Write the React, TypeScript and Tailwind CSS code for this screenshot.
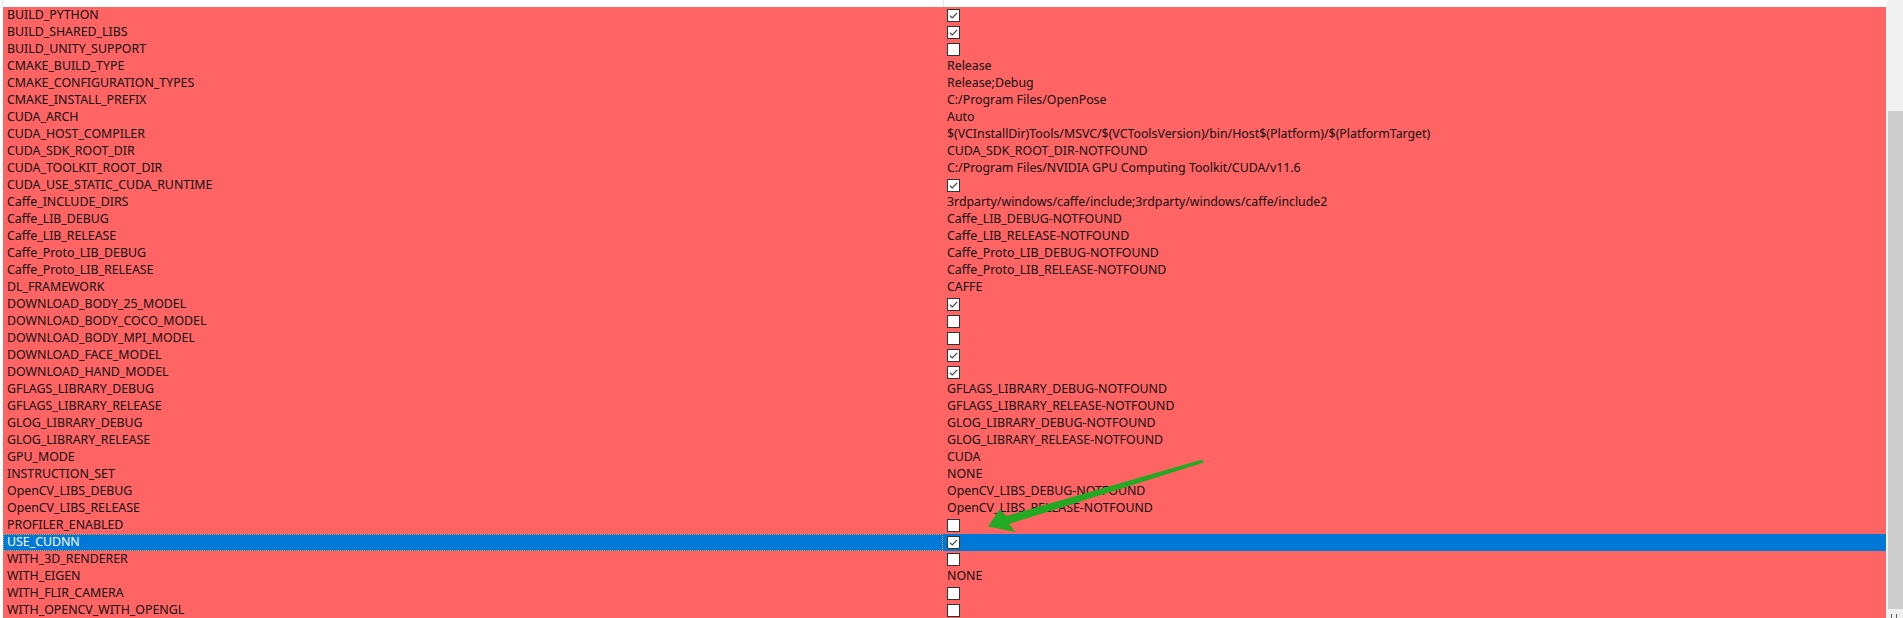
import React from 'react'

type Row = { name: string; value: string | boolean }

const rows: Row[] = [
  { name: 'BUILD_PYTHON', value: true },
  { name: 'BUILD_SHARED_LIBS', value: true },
  { name: 'BUILD_UNITY_SUPPORT', value: false },
  { name: 'CMAKE_BUILD_TYPE', value: 'Release' },
  { name: 'CMAKE_CONFIGURATION_TYPES', value: 'Release;Debug' },
  { name: 'CMAKE_INSTALL_PREFIX', value: 'C:/Program Files/OpenPose' },
  { name: 'CUDA_ARCH', value: 'Auto' },
  { name: 'CUDA_HOST_COMPILER', value: '$(VCInstallDir)Tools/MSVC/$(VCToolsVersion)/bin/Host$(Platform)/$(PlatformTarget)' },
  { name: 'CUDA_SDK_ROOT_DIR', value: 'CUDA_SDK_ROOT_DIR-NOTFOUND' },
  { name: 'CUDA_TOOLKIT_ROOT_DIR', value: 'C:/Program Files/NVIDIA GPU Computing Toolkit/CUDA/v11.6' },
  { name: 'CUDA_USE_STATIC_CUDA_RUNTIME', value: true },
  { name: 'Caffe_INCLUDE_DIRS', value: '3rdparty/windows/caffe/include;3rdparty/windows/caffe/include2' },
  { name: 'Caffe_LIB_DEBUG', value: 'Caffe_LIB_DEBUG-NOTFOUND' },
  { name: 'Caffe_LIB_RELEASE', value: 'Caffe_LIB_RELEASE-NOTFOUND' },
  { name: 'Caffe_Proto_LIB_DEBUG', value: 'Caffe_Proto_LIB_DEBUG-NOTFOUND' },
  { name: 'Caffe_Proto_LIB_RELEASE', value: 'Caffe_Proto_LIB_RELEASE-NOTFOUND' },
  { name: 'DL_FRAMEWORK', value: 'CAFFE' },
  { name: 'DOWNLOAD_BODY_25_MODEL', value: true },
  { name: 'DOWNLOAD_BODY_COCO_MODEL', value: false },
  { name: 'DOWNLOAD_BODY_MPI_MODEL', value: false },
  { name: 'DOWNLOAD_FACE_MODEL', value: true },
  { name: 'DOWNLOAD_HAND_MODEL', value: true },
  { name: 'GFLAGS_LIBRARY_DEBUG', value: 'GFLAGS_LIBRARY_DEBUG-NOTFOUND' },
  { name: 'GFLAGS_LIBRARY_RELEASE', value: 'GFLAGS_LIBRARY_RELEASE-NOTFOUND' },
  { name: 'GLOG_LIBRARY_DEBUG', value: 'GLOG_LIBRARY_DEBUG-NOTFOUND' },
  { name: 'GLOG_LIBRARY_RELEASE', value: 'GLOG_LIBRARY_RELEASE-NOTFOUND' },
  { name: 'GPU_MODE', value: 'CUDA' },
  { name: 'INSTRUCTION_SET', value: 'NONE' },
  { name: 'OpenCV_LIBS_DEBUG', value: 'OpenCV_LIBS_DEBUG-NOTFOUND' },
  { name: 'OpenCV_LIBS_RELEASE', value: 'OpenCV_LIBS_RELEASE-NOTFOUND' },
  { name: 'PROFILER_ENABLED', value: false },
  { name: 'USE_CUDNN', value: true },
  { name: 'WITH_3D_RENDERER', value: false },
  { name: 'WITH_EIGEN', value: 'NONE' },
  { name: 'WITH_FLIR_CAMERA', value: false },
  { name: 'WITH_OPENCV_WITH_OPENGL', value: false },
]

const Check = ({ on }: { on: boolean }) => (
  <svg width="13" height="13" viewBox="0 0 13 13" className="block">
    <rect x="0.5" y="0.5" width="12" height="12" fill="#fff" stroke="#333" />
    {on && <path d="M2.8 6.6 L5.2 9 L10.2 3.8" fill="none" stroke="#444" strokeWidth="1.2" />}
  </svg>
)

export default function App() {
  const selected = 'USE_CUDNN'
  return (
    <div
      className="relative flex h-[618px] w-[1903px] overflow-hidden bg-white text-[12.35px] text-[#111]"
      style={{ fontFamily: '"Noto Sans", "Liberation Sans", sans-serif' }}
    >
      <div className="flex flex-1 flex-col">
        {/* tail of the header row */}
        <div className="flex h-[7px] shrink-0">
          <div className="ml-[2px] w-[942px] border-x border-[#e5e5e5]" />
          <div className="flex-1" />
        </div>
        <div className="ml-[3px]">
          {rows.map((r) => {
            const sel = r.name === selected
            return (
              <div
                key={r.name}
                className={`flex h-[17px] items-center ${sel ? 'bg-[#0078d7] text-white' : 'bg-[#ff6464]'}`}
              >
                <div
                  className={`flex h-full w-[940px] items-center ${sel ? 'border border-dotted border-[#f0a030] pl-[3px]' : 'pl-[4px]'}`}
                >
                  {r.name}
                </div>
                <div className="flex-1 pl-[4px]">
                  {typeof r.value === 'boolean' ? (
                    <Check on={r.value} />
                  ) : (
                    <span className="whitespace-nowrap">{r.value}</span>
                  )}
                </div>
              </div>
            )
          })}
        </div>
      </div>

      {/* vertical scrollbar */}
      <div className="flex w-[17px] shrink-0 flex-col border-l border-[#fafafa] bg-[#f0f0f0]">
        <div className="h-[111px]" />
        <div className="mx-auto h-[500px] w-[15px] bg-[#cdcdcd]" />
        <div className="flex flex-1 justify-center pt-[5px]">
          <svg width="8" height="4" viewBox="0 0 8 4">
            <path d="M0.5 0 V4 M5.5 0 V4" stroke="#606060" strokeWidth="1" />
          </svg>
        </div>
      </div>

      {/* green annotation arrow */}
      <svg className="pointer-events-none absolute left-0 top-0" width="1903" height="618">
        <polygon
          points="1202.2,459.5 1006.5,516 999.5,509.5 988,526.5 1015.5,532 1009,524 1203.8,462.5"
          fill="#22aa22"
        />
      </svg>
    </div>
  )
}
